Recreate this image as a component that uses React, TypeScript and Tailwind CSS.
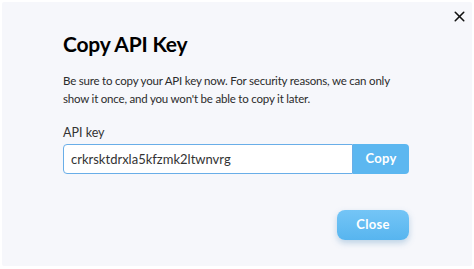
import { X } from 'lucide-react';

export default function App() {
  return (
    <div className="h-[269px] w-[474px] bg-white p-[2px] font-['Lato',sans-serif]">
      <div className="relative flex h-[264px] flex-col rounded-[2px] bg-[#f6f7fb] pl-[61px] pr-[63px] pt-[27px]">
        <button className="absolute right-[4px] top-[6px] text-[#111]">
          <X size={17} strokeWidth={2.2} />
        </button>

        <h2 className="text-[21px] font-bold leading-[30px] tracking-[-0.2px] text-black">Copy API Key</h2>

        <p className="mt-[13px] whitespace-nowrap text-[11.5px] leading-[18px] tracking-[-0.2px] text-[#2b2b2b]">
          Be sure to copy your API key now. For security reasons, we can only
          <br />
          show it once, and you won't be able to copy it later.
        </p>

        <label className="mt-[17px] text-[12.5px] leading-[16px] text-[#333]">API key</label>

        <div className="mt-[3px] flex h-[30px]">
          <input
            readOnly
            value="crkrsktdrxla5kfzmk2ltwnvrg"
            className="h-full min-w-0 flex-1 rounded-l-[4px] border border-[#69aee8] bg-white px-[7px] text-[13px] text-[#333] outline-none"
          />
          <button className="h-full w-[56px] rounded-r-[4px] bg-[#5cb7f0] text-[13px] font-bold tracking-[0.3px] text-white">
            Copy
          </button>
        </div>

        <div className="mt-[36px] flex justify-end">
          <button className="h-[30px] w-[72px] rounded-[8px] bg-gradient-to-b from-[#74c5f6] to-[#57b5ef] text-[13px] font-bold tracking-[0.3px] text-white shadow-[0_3px_6px_rgba(80,140,190,0.35)]">
            Close
          </button>
        </div>
      </div>
    </div>
  );
}
